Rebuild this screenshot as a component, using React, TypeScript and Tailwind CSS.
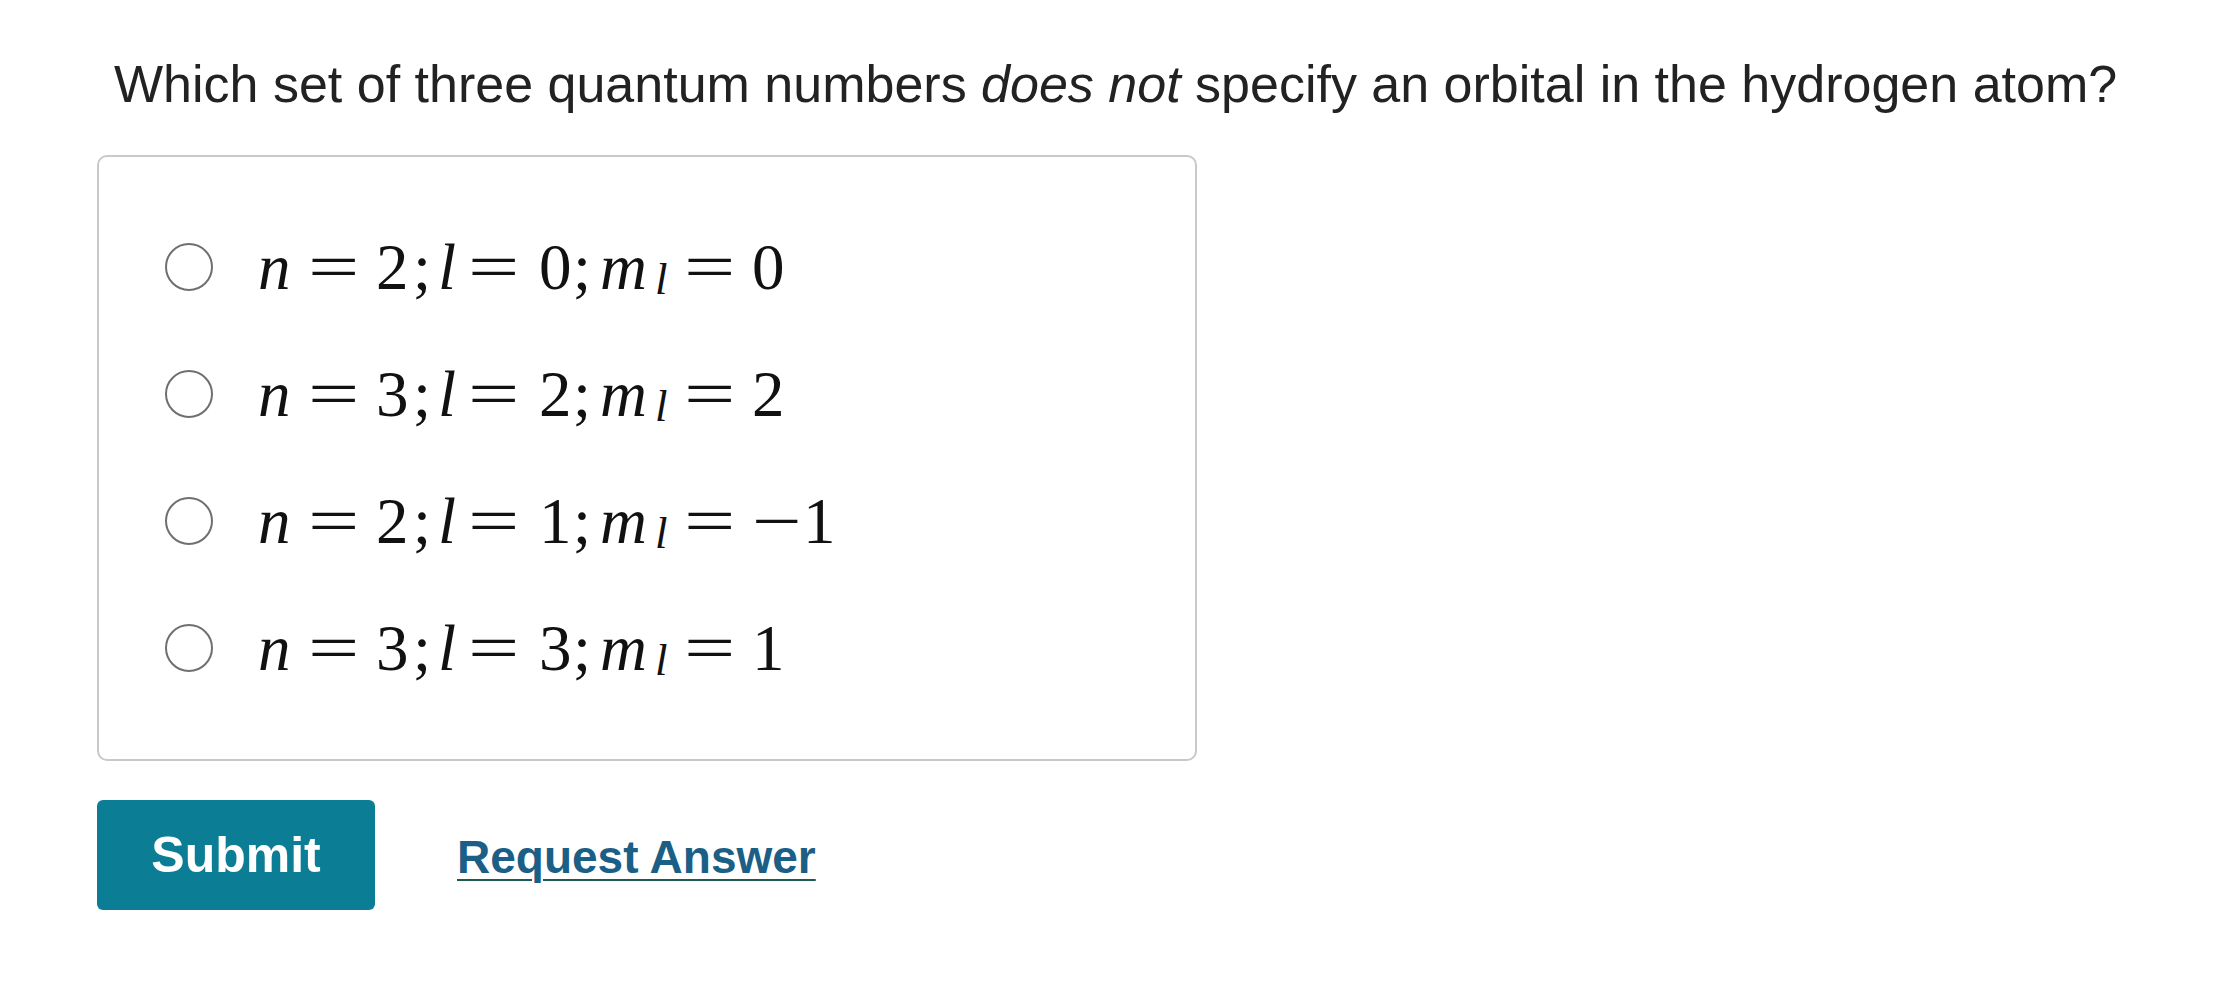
const options = [
	{ n: "2", l: "0", ml: "0", neg: false },
	{ n: "3", l: "2", ml: "2", neg: false },
	{ n: "2", l: "1", ml: "1", neg: true },
	{ n: "3", l: "3", ml: "1", neg: false },
];

function Eq({ w }: { w: string }) {
	return (
		<span className={`${w} shrink-0`}>
			<span className="inline-block origin-left scale-x-[1.4] not-italic">=</span>
		</span>
	);
}

function QuantumSet({ n, l, ml, neg }: { n: string; l: string; ml: string; neg: boolean }) {
	return (
		<span className="mt-[2px] flex items-baseline font-['Liberation_Serif',serif] text-[65px] leading-none text-[#111]">
			<span className="w-[50px] shrink-0 italic">n</span>
			<Eq w="w-[68px]" />
			<span className="w-[37px] shrink-0">{n}</span>
			<span className="w-[25px] shrink-0">;</span>
			<span className="w-[30px] shrink-0 italic">l</span>
			<Eq w="w-[71px]" />
			<span className="w-[34px] shrink-0">{l}</span>
			<span className="w-[27px] shrink-0">;</span>
			<span className="w-[55px] shrink-0 italic">m</span>
			<span className="relative top-[5px] w-[29px] shrink-0 text-[45px] italic">l</span>
			<Eq w="w-[68px]" />
			{neg && (
				<span className="w-[51px] shrink-0">
					<span className="inline-block origin-left scale-x-[1.36]">{"\u2212"}</span>
				</span>
			)}
			<span>{ml}</span>
		</span>
	);
}

export default function App() {
	return (
		<div className="min-h-screen bg-white pl-[97px] pt-[54px] font-['Liberation_Sans',Arial,sans-serif]">
			<p className="ml-[17px] text-[52px] leading-[60px] text-[#222]">
				Which set of three quantum numbers <em>does not</em> specify an orbital in the
				hydrogen atom?
			</p>
			<div className="mt-[41px] flex w-[1100px] flex-col rounded-[10px] border-2 border-[#c9c9c9] pt-[46px] pb-[48px] pl-[66px]">
				{options.map((o, i) => (
					<label key={i} className="flex h-[127px] items-center gap-[45px]">
						<span className="h-[48px] w-[48px] shrink-0 rounded-full border-2 border-[#6f6f6f] bg-white" />
						<QuantumSet n={o.n} l={o.l} ml={o.ml} neg={o.neg} />
					</label>
				))}
			</div>
			<div className="mt-[39px] flex items-center gap-[82px]">
				<button className="h-[110px] w-[278px] rounded-[6px] bg-[#0b7e95] text-[50px] font-bold text-white">
					Submit
				</button>
				<a
					href="#"
					className="mt-[4px] text-[46px] font-bold text-[#1b5f86] underline decoration-[#1d5a50] decoration-2 underline-offset-[6px]"
				>
					Request Answer
				</a>
			</div>
		</div>
	);
}
